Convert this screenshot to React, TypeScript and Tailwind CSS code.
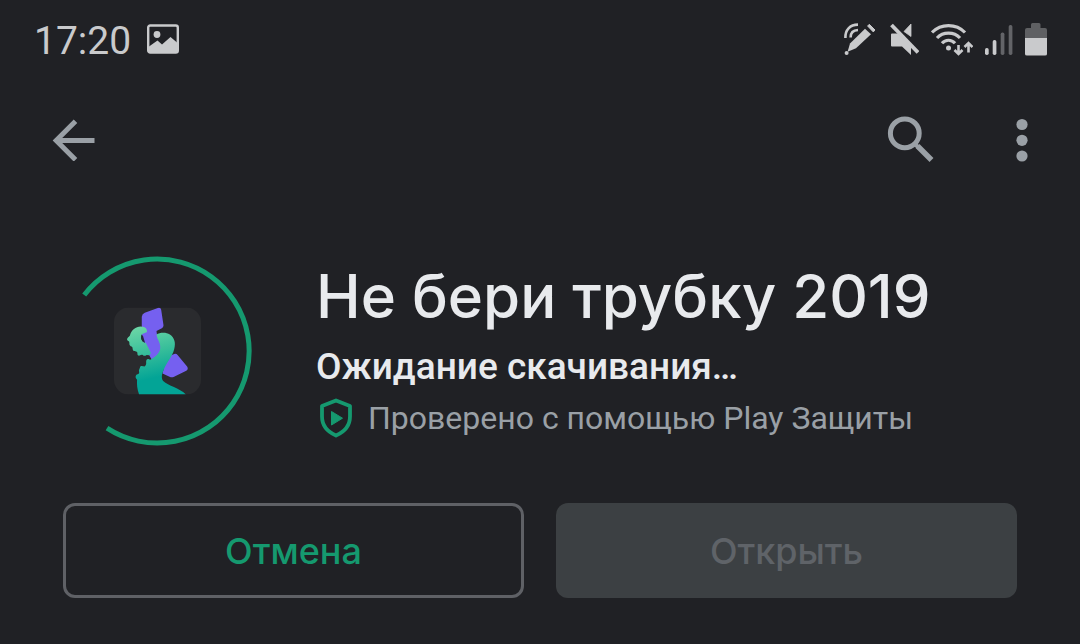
import React from "react";

function StatusBar() {
  return (
    <header className="flex h-20 items-center justify-between pb-0.5 pl-[34px] pr-[33px] text-[#c9cacc]">
      <div className="flex items-center gap-4">
        <time className="pt-1 text-[39px] leading-none">17:20</time>
        <svg className="h-[30px] w-8" viewBox="0 0 32 30" aria-hidden="true">
          <rect x="1.200" y="1.500" width="29.600" height="27" rx="2" fill="none" stroke="currentColor" strokeWidth="2.400" />
          <circle cx="10" cy="10.500" r="3.400" fill="currentColor" />
          <path d="M2 22.500L10.500 16.500L15 20.500L23.500 13L30 18.500V28H2Z" fill="currentColor" />
        </svg>
      </div>
      <div className="flex items-center">
        <svg className="h-9 w-8" viewBox="0 0 32 36" aria-hidden="true">
          <g fill="none" stroke="currentColor" strokeWidth="2.600">
            <path d="M2.400 17C2 9 7 3.600 15 3.600" />
            <path d="M7.600 16.500C7.600 12 10 9.200 15 9" />
          </g>
          <path d="M22 7.800L28 13.300L13 27.300L5.200 30.500L4.800 30L7 22.500Z" fill="currentColor" />
          <path d="M24.600 5L26.300 3.300L32 9L30.300 10.900Z" fill="currentColor" stroke="currentColor" strokeWidth="1" strokeLinejoin="round" />
          <circle cx="3.600" cy="32" r="2" fill="currentColor" />
        </svg>
        <svg className="ml-[14px] h-9 w-[30px]" viewBox="0 0 30 36" aria-hidden="true">
          <path d="M2 13.500Q2 12.500 3 12.500H9L22 25.500V34L13 25.500H3Q2 25.500 2 24.500Z" fill="currentColor" />
          <path d="M22 3V15.500L15 10.500Z" fill="currentColor" stroke="currentColor" strokeWidth="0.800" strokeLinejoin="round" />
          <path d="M2.500 4L29 31.500" stroke="currentColor" strokeWidth="3.800" />
        </svg>
        <svg className="ml-3 h-9 w-[42px]" viewBox="0 0 42 36" aria-hidden="true">
          <g fill="none" stroke="currentColor" strokeWidth="3.200">
            <path d="M1 11.500C10 2.300 25 2.300 34 11.500" />
            <path d="M6 17C12 10.500 23 10.500 29 17" />
            <path d="M11 22.300C14.500 18.200 20.500 18.200 24 22.300" />
          </g>
          <circle cx="17.500" cy="27" r="2.500" fill="currentColor" />
          <path d="M27.500 24V33M23.500 29L27.500 33L31.500 29M37.500 31.500V21.500M33.500 26L37.500 22L41.500 26" fill="none" stroke="currentColor" strokeWidth="2.600" />
        </svg>
        <svg className="ml-3 h-9 w-7" viewBox="0 0 28 36" aria-hidden="true">
          <g fill="currentColor">
            <rect x="0" y="27" width="3.700" height="7" rx="1.700" />
            <rect x="7.700" y="19" width="3.700" height="15" rx="1.700" />
            <rect x="15.700" y="11.500" width="3.700" height="22.500" rx="1.700" opacity="0.400" />
            <rect x="23.700" y="4" width="3.700" height="30" rx="1.700" opacity="0.400" />
          </g>
        </svg>
        <svg className="ml-3 h-9 w-[22px]" viewBox="0 0 22 36" aria-hidden="true">
          <path d="M0 17V9Q0 7 2 7H6V3.500Q6 2 7.500 2H14Q15.500 2 15.500 3.500V7H20Q22 7 22 9V17Z" fill="#5f6063" />
          <path d="M0 17H22V33Q22 34.500 20 34.500H2Q0 34.500 0 33Z" fill="currentColor" />
        </svg>
      </div>
    </header>
  );
}

function Toolbar() {
  return (
    <nav className="flex h-[120px] items-center justify-between px-[52px] text-[#9aa0a6]">
      <button type="button" aria-label="Назад">
        <svg className="h-[42px] w-[44px]" viewBox="0 0 44 42" fill="none" stroke="currentColor" strokeWidth="5">
          <path d="M42.500 21.500H4M23.500 2.200L4.200 21.500L23.500 40.800" />
        </svg>
      </button>
      <div className="flex items-center gap-[82px]">
        <button type="button" aria-label="Поиск">
          <svg className="h-[50px] w-[47px]" viewBox="0 0 47 50" fill="none" stroke="currentColor">
            <circle cx="17.800" cy="18.300" r="14.400" strokeWidth="5" />
            <path d="M30.500 31L44.500 45" strokeWidth="5.500" />
            <path d="M27 28L32 33" strokeWidth="4" />
          </svg>
        </button>
        <button type="button" aria-label="Ещё">
          <svg className="h-[44px] w-3" viewBox="0 0 12 44" fill="currentColor">
            <circle cx="6" cy="6.500" r="5.600" />
            <circle cx="6" cy="22.300" r="5.600" />
            <circle cx="6" cy="38" r="5.600" />
          </svg>
        </button>
      </div>
    </nav>
  );
}

function AppIcon() {
  return (
    <svg className="h-[190px] w-[190px] shrink-0" viewBox="0 0 190 190" role="img" aria-label="Загрузка">
      <defs>
        <linearGradient id="tentacle" gradientUnits="userSpaceOnUse" x1="210" y1="245" x2="250" y2="415">
          <stop offset="0" stopColor="#6bd6a6" />
          <stop offset="0.450" stopColor="#38be9a" />
          <stop offset="0.900" stopColor="#03a496" />
        </linearGradient>
      </defs>
      <path d="M22.200 39A92 92 0 1 1 45 172.200" fill="none" stroke="#15996f" strokeWidth="5" />
      <svg x="52" y="51.500" width="87" height="87" viewBox="133 186 260 260">
        <rect x="133" y="186" width="260" height="260" rx="44" fill="#2a2b2e" />
        <path d="M216 214Q217 205 225 202L266 187Q273 186 274 193L281 239Q281 245 276 248L260 256L262 272L280 300L270 330L246 342L222 300L217 272L216 240Z" fill="#7560f0" />
        <path d="M290 335L313 325Q319 323 323 328L352 363Q356 370 349 375L311 394Q305 396 299 393L278 383Z" fill="#7560f0" />
        <path
          d="M231 260C234 252 227 243 213 243C197 244 186 253 181 268C181 272 172 275 172 282C173 287 179 286 179 291C178 297 181 301 187 303C190 306 187 312 192 316C197 319 201 316 203 321C202 328 206 332 211 329C216 325 219 328 222 330C228 331 230 327 233 328C238 330 243 326 243 321L228 291C220 291 213 283 215 271C217 263 224 263 231 260Z"
          fill="url(#tentacle)"
        />
        <path d="M216 267C211 278 216 289 226 292L220 272Z" fill="#252a3a" />
        <path
          d="M260 267C270 260 289 259 300 267C314 277 318 292 313 310C307 334 291 349 282 371C275 386 274 397 280 406C296 421 327 426 348 446H208C202 430 201 416 202 402C197 398 196 391 200 387C205 386 210 383 208 379C206 371 211 369 211 364C212 359 219 361 224 362C228 360 230 355 229 349C229 341 233 338 238 341C241 344 245 341 248 338C259 331 269 322 271 309C273 293 264 284 262 276Z"
          fill="url(#tentacle)"
        />
      </svg>
    </svg>
  );
}

function AppHeader() {
  return (
    <section className="flex items-start pl-[62px] pr-8 pt-14">
      <AppIcon />
      <div className="ml-16 min-w-0 whitespace-nowrap">
        <h1 className="font-['Inter',sans-serif] text-[60px] font-medium leading-[80px] text-[#e8eaed]">
          Не бери трубку 2019
        </h1>
        <p className="text-[37px] font-medium leading-[62px] text-[#e8eaed]">Ожидание скачивания…</p>
        <p className="flex items-center gap-4 text-[32px] leading-10 text-[#9aa0a6]">
          <svg className="ml-1 h-10 w-8 shrink-0" viewBox="0 0 32 40" aria-hidden="true">
            <path
              d="M16 2.500L30 8V18.500C30 27.500 24 34 16 37.500C8 34 2 27.500 2 18.500V8Z"
              fill="none"
              stroke="#15996f"
              strokeWidth="3.800"
              strokeLinejoin="round"
            />
            <path d="M11.500 13.500L22.500 20.200L11.500 27Z" fill="#15996f" stroke="#15996f" strokeLinejoin="round" />
          </svg>
          Проверено с помощью Play Защиты
        </p>
      </div>
    </section>
  );
}

export default function App() {
  return (
    <main className="min-h-screen overflow-x-hidden bg-[#202125] font-['Roboto',sans-serif]">
      <StatusBar />
      <Toolbar />
      <AppHeader />
      <div className="grid grid-cols-2 gap-8 px-[63px] pb-11 pt-[57px] font-['Inter',sans-serif] text-[36px] font-medium">
        <button type="button" className="h-[95px] rounded-xl border-3 border-[#5f6166] text-[#15996f]">
          Отмена
        </button>
        <button type="button" disabled className="h-[95px] rounded-xl bg-[#3c4043] text-[#5f6368]">
          Открыть
        </button>
      </div>
    </main>
  );
}
